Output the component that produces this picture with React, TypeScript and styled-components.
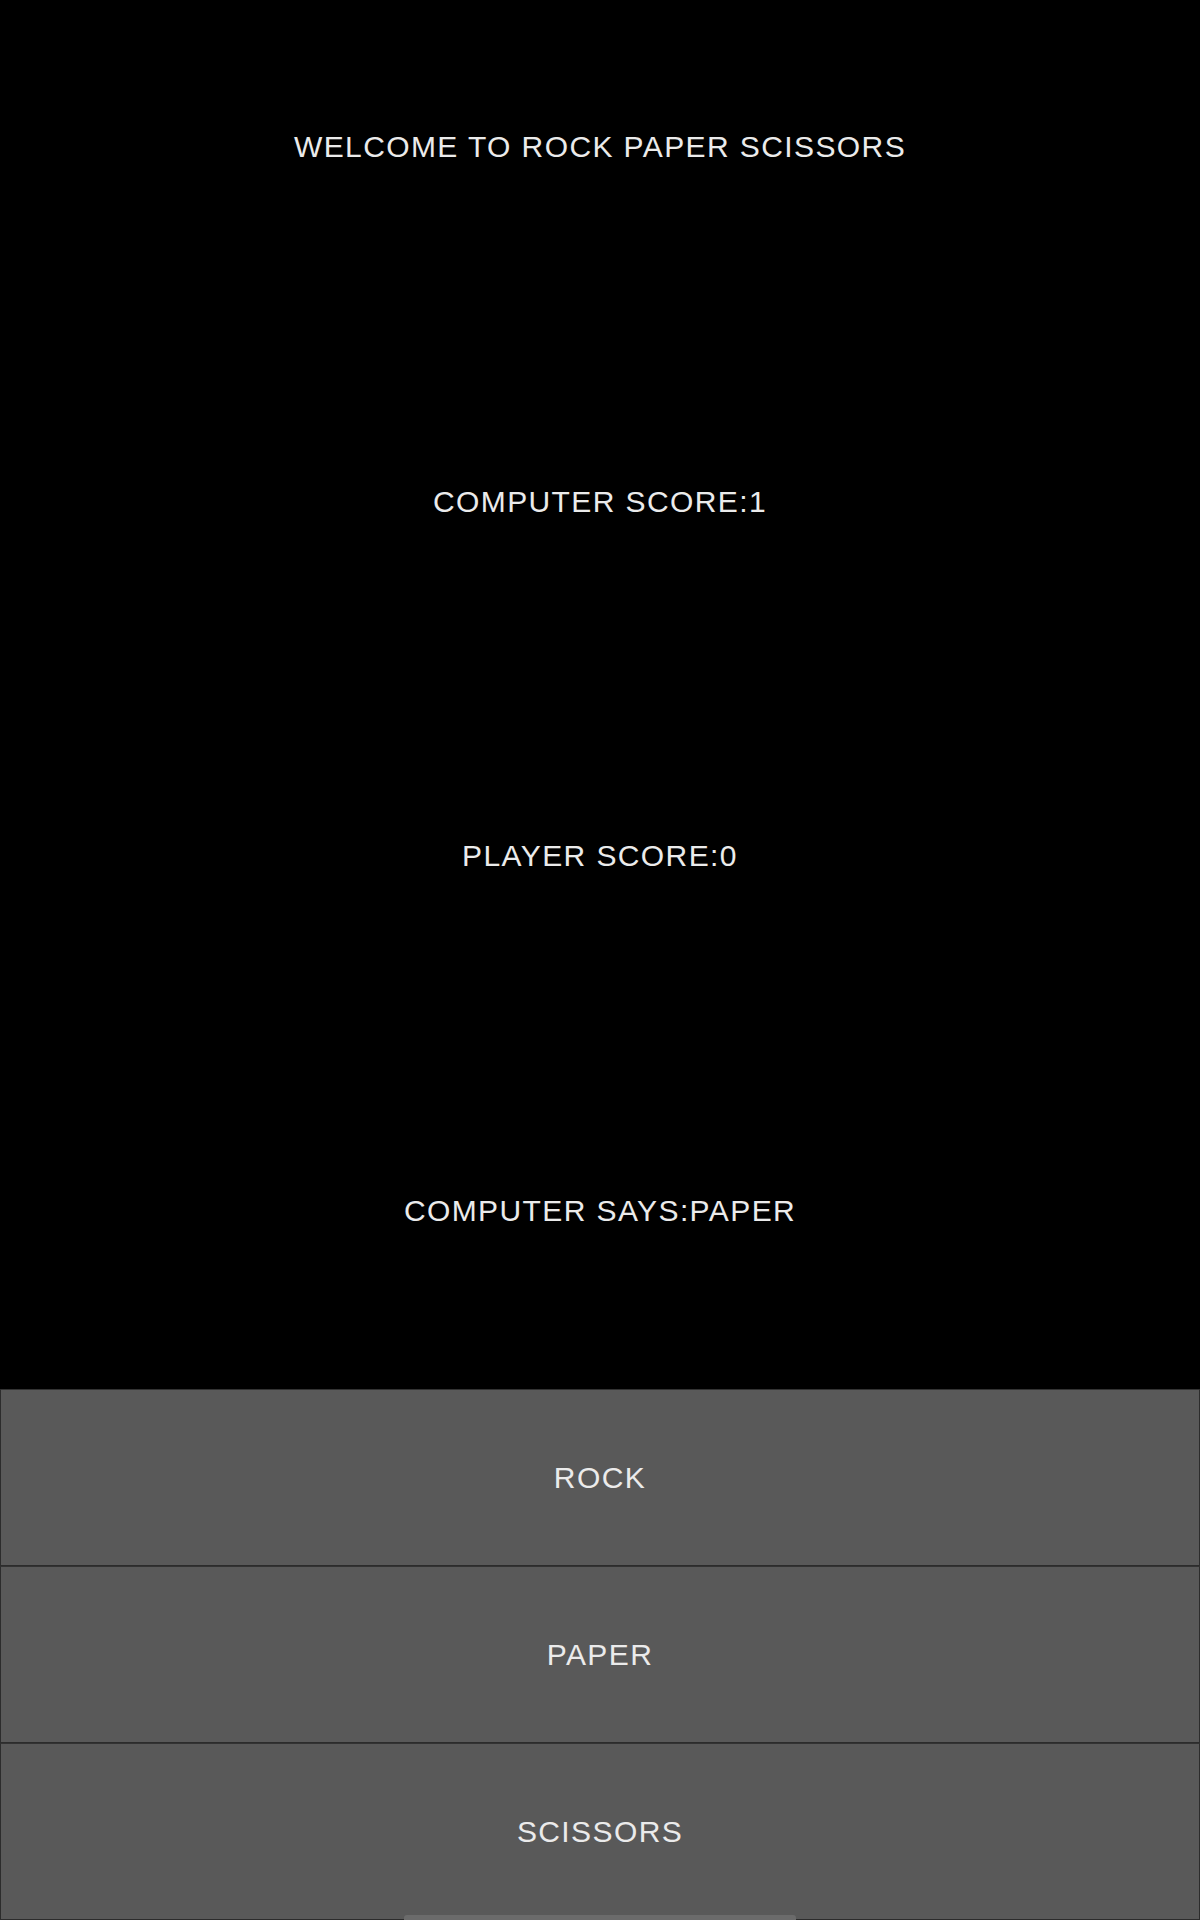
import styled, { createGlobalStyle } from 'styled-components';

const GlobalStyle = createGlobalStyle`
  html, body {
    margin: 0;
    padding: 0;
    background: #000;
  }
  * {
    box-sizing: border-box;
  }
`;

const CHOICES = ['ROCK', 'PAPER', 'SCISSORS'];

const Screen = styled.div`
  position: relative;
  width: 1200px;
  height: 1920px;
  display: flex;
  flex-direction: column;
  background: #000;
  font-family: 'Liberation Sans', Arial, sans-serif;
  color: #ebebeb;
`;

const Board = styled.section`
  flex: 1;
  display: flex;
  flex-direction: column;
  align-items: center;
  padding-top: 129px;
  gap: 318.5px;
`;

const Line = styled.div`
  height: 36px;
  line-height: 36px;
  font-size: 30px;
  letter-spacing: 1.4px;
  text-align: center;
`;

const Controls = styled.div`
  display: flex;
  flex-direction: column;
`;

const ChoiceButton = styled.button`
  height: 177px;
  width: 100%;
  margin: 0;
  background: #595959;
  border: 1px solid #2c2c2c;
  border-top-color: #333;
  color: #ebebeb;
  font-family: 'Liberation Sans', Arial, sans-serif;
  font-size: 30px;
  letter-spacing: 1.4px;
  cursor: pointer;
`;

const HomeBar = styled.div`
  position: absolute;
  left: 404px;
  bottom: 0;
  width: 392px;
  height: 5px;
  background: #6b6b6b;
  border-radius: 3px 3px 0 0;
`;

export default function App() {
  return (
    <Screen>
      <GlobalStyle />
      <Board>
        <Line>WELCOME TO ROCK PAPER SCISSORS</Line>
        <Line>COMPUTER SCORE:1</Line>
        <Line>PLAYER SCORE:0</Line>
        <Line>COMPUTER SAYS:PAPER</Line>
      </Board>
      <Controls>
        {CHOICES.map((choice) => (
          <ChoiceButton key={choice}>{choice}</ChoiceButton>
        ))}
      </Controls>
      <HomeBar />
    </Screen>
  );
}
